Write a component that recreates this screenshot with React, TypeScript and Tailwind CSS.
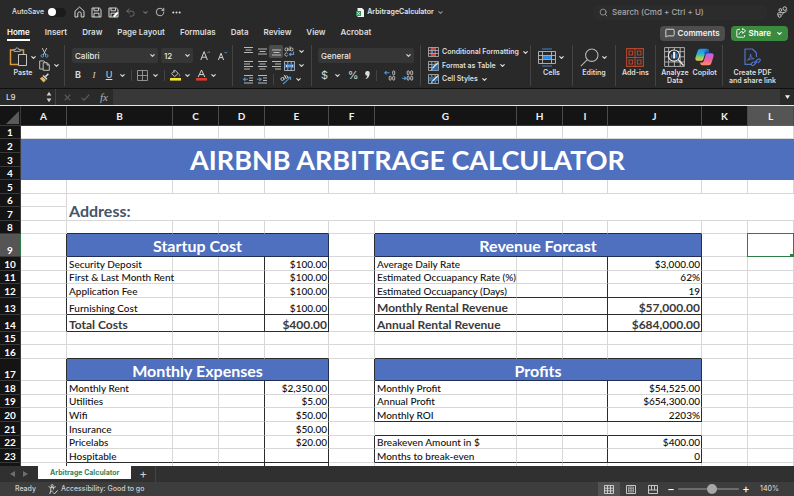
import { Fragment, useState, type ReactNode } from "react";
import { ChevronDown, MessageSquare, RotateCw, Search, Undo2 } from "lucide-react";
import clsx from "clsx";

const UI = "font-['Inter','Liberation_Sans',sans-serif]";
const SHEET = "font-['Lato','Liberation_Sans',sans-serif]";

const LIGHT_R = "border-r-[#d8d8d8]";
const DARK_R = "border-r-[#2b2b2b]";
const LIGHT_B = "border-b-[#d8d8d8]";
const DARK_B = "border-b-[#2b2b2b]";

type Box = {
  title?: string;
  label?: string;
  value?: string;
  bold?: boolean;
  line?: boolean;
  empty?: boolean;
};

type SheetRow = { n?: number; h: string; left?: Box; right?: Box };

const columns = [
  { name: "A", w: "w-[46px]" },
  { name: "B", w: "w-[106px]" },
  { name: "C", w: "w-[46px]" },
  { name: "D", w: "w-[46px]" },
  { name: "E", w: "w-[64px]" },
  { name: "F", w: "w-[46px]" },
  { name: "G", w: "w-[142px]" },
  { name: "H", w: "w-[46px]" },
  { name: "I", w: "w-[45px]" },
  { name: "J", w: "w-[94px]" },
  { name: "K", w: "w-[46px]" },
  { name: "L", w: "w-auto" },
];

const line: Box = { empty: true, line: true };

const rows: SheetRow[] = [
  { n: 8, h: "h-[13px]", left: line, right: line },
  { n: 9, h: "h-[23px]", left: { title: "Startup Cost" }, right: { title: "Revenue Forcast" } },
  { n: 10, h: "h-[14px]", left: { label: "Security Deposit", value: "$100.00" }, right: { label: "Average Daily Rate", value: "$3,000.00" } },
  { n: 11, h: "h-[13px]", left: { label: "First & Last Month Rent", value: "$100.00" }, right: { label: "Estimated Occuapancy Rate (%)", value: "62%" } },
  { n: 12, h: "h-[14px]", left: { label: "Application Fee", value: "$100.00" }, right: { label: "Estimated Occuapancy (Days)", value: "19", line: true } },
  { n: 13, h: "h-[17px]", left: { label: "Furnishing Cost", value: "$100.00", line: true }, right: { label: "Monthly Rental Revenue", value: "$57,000.00", bold: true, line: true } },
  { n: 14, h: "h-[17px]", left: { label: "Total Costs", value: "$400.00", bold: true, line: true }, right: { label: "Annual Rental Revenue", value: "$684,000.00", bold: true, line: true } },
  { n: 15, h: "h-[13px]" },
  { n: 16, h: "h-[14px]", left: line, right: line },
  { n: 17, h: "h-[22px]", left: { title: "Monthly Expenses" }, right: { title: "Profits" } },
  { n: 18, h: "h-[14px]", left: { label: "Monthly Rent", value: "$2,350.00" }, right: { label: "Monthly Profit", value: "$54,525.00" } },
  { n: 19, h: "h-[13px]", left: { label: "Utilities", value: "$5.00" }, right: { label: "Annual Profit", value: "$654,300.00" } },
  { n: 20, h: "h-[14px]", left: { label: "Wifi", value: "$50.00" }, right: { label: "Monthly ROI", value: "2203%", line: true } },
  { n: 21, h: "h-[14px]", left: { label: "Insurance", value: "$50.00" }, right: line },
  { n: 22, h: "h-[13px]", left: { label: "Pricelabs", value: "$20.00" }, right: { label: "Breakeven Amount in $", value: "$400.00" } },
  { n: 23, h: "h-[14px]", left: { label: "Hospitable", line: true }, right: { label: "Months to break-even", value: "0", line: true } },
  { h: "h-[14px]", left: { label: "" } },
];

function Chevron({ className }: { className?: string }) {
  return <ChevronDown size={7} strokeWidth={4} className={clsx("shrink-0", className)} />;
}

function IconButton({ label, className, children }: { label: string; className?: string; children: ReactNode }) {
  return (
    <button type="button" aria-label={label} className={clsx("flex shrink-0 items-center justify-center", className)}>
      {children}
    </button>
  );
}

function Divider({ className }: { className?: string }) {
  return <div className={clsx("w-px shrink-0 bg-[#444]", className)} />;
}

function HomeIcon() {
  return (
    <svg width="11" height="12" viewBox="0 0 11 12" fill="none" stroke="#d6d6d6">
      <path d="M1 5.2 5.5 1 10 5.2V11H7.2V7.6a1.7 1.7 0 0 0-3.4 0V11H1z" strokeLinejoin="round" />
    </svg>
  );
}

function SaveIcon({ pencil }: { pencil?: boolean }) {
  return (
    <svg width="11" height="11" viewBox="0 0 11 11" fill="none" stroke="#d6d6d6">
      <path d="M1 1h7.4L10 2.6V10H1z" strokeLinejoin="round" />
      <path d="M3 1v2.8h4.6V1M3 10V6.2h5V10" />
      {pencil && <path d="M5.6 9.8 9.8 5.4" stroke="#fff" strokeWidth="2" />}
    </svg>
  );
}

function PasteIcon() {
  return (
    <svg width="19" height="20" viewBox="0 0 19 20" fill="none">
      <path d="M9 17.5H1.5V3h13v4" stroke="#dd9a3c" strokeWidth="1.5" />
      <path d="M5 4.4V2.4h1.6a1.5 1.5 0 0 1 3 0h1.6v2z" fill="#292929" stroke="#bbb" strokeWidth=".9" />
      <path d="M9.5 7.5h8v11h-8z" fill="#292929" stroke="#c4c4c4" />
    </svg>
  );
}

function CutIcon() {
  return (
    <svg width="9" height="11" viewBox="0 0 9 11" fill="none">
      <path d="m2.2 1 3.6 7M6.8 1 3.2 8" stroke="#d0d0d0" strokeWidth=".9" />
      <circle cx="2.3" cy="8.9" r="1.3" stroke="#4f97d8" />
      <circle cx="6.7" cy="8.9" r="1.3" stroke="#4f97d8" />
    </svg>
  );
}

function CopyIcon() {
  return (
    <svg width="11" height="11" viewBox="0 0 11 11" fill="none" stroke="#cfcfcf" strokeWidth=".9">
      <path d="M4 9H.7V.9h4.1L6.3 2.4" />
      <path d="M4.2 2.7h4L10.3 5v5.3H4.2z" />
      <path d="M8 2.8V5h2.3" />
    </svg>
  );
}

function BrushIcon() {
  return (
    <svg width="11" height="10" viewBox="0 0 11 10" fill="none">
      <path d="m6.4 3.6 3-2.8" stroke="#d9d9d9" strokeWidth="1.5" />
      <path d="m4 2.6 4 3.6" stroke="#d9d9d9" strokeWidth="1.4" />
      <path d="M3.4 3.8 7 7 4.6 9.4.8 5.6z" fill="#e5b566" />
    </svg>
  );
}

function BordersIcon() {
  return (
    <svg width="11" height="11" viewBox="0 0 11 11" fill="none" stroke="#9c9c9c" strokeWidth=".9">
      <path d="M.5.5h10v10H.5z" />
      <path d="M5.5.5v10M.5 5.5h10" />
    </svg>
  );
}

function FillIcon() {
  return (
    <svg width="11" height="12" viewBox="0 0 11 12" fill="none">
      <path d="m5 1.2 3.2 3.2-3.6 3.3-3-3z" stroke="#d6d6d6" strokeWidth=".9" />
      <path d="M4 .8v3" stroke="#d6d6d6" strokeWidth=".8" />
      <path d="M8.4 4.4c1.4.6 1.3 2 .9 3" stroke="#4f97d8" />
      <path d="M0 9h11v2.6H0z" fill="#f7e733" />
    </svg>
  );
}

function FontColorIcon() {
  return (
    <svg width="11" height="12" viewBox="0 0 11 12" fill="none">
      <path d="m2.2 8 3.3-7 3.3 7M3.4 5.6h4.2" stroke="#d6d6d6" strokeWidth="1" />
      <path d="M0 9h11v2.6H0z" fill="#dc3a2c" />
    </svg>
  );
}

function FontSizeIcon({ large }: { large?: boolean }) {
  return (
    <svg width="11" height="11" viewBox="0 0 11 11" fill="none">
      <path d={large ? "M.8 10 4.1 1.6 7.4 10M2 7.2h4.2" : "M1.4 10 4 3.2 6.6 10M2.4 7.6h3.2"} stroke="#d2d2d2" strokeWidth="1" />
      <path d={large ? "m7.4 3 1.3-1.4L10 3" : "m7.4 1.8 1.3 1.4L10 1.8"} stroke="#4f97d8" strokeWidth=".9" />
    </svg>
  );
}

const alignPaths: Record<string, string> = {
  "Top align": "M1 1.5h9M2.5 4h6M1 6.5h9",
  "Middle align": "M1 3h9M2.5 5.5h6M1 8h9",
  "Bottom align": "M1 4h9M2.5 6.5h6M1 9h9",
  "Align left": "M1 1.5h9M1 4h6M1 6.5h9M1 9h6",
  Center: "M1 1.5h9M2.5 4h6M1 6.5h9M2.5 9h6",
  "Align right": "M1 1.5h9M4 4h6M1 6.5h9M4 9h6",
};

function AlignIcon({ name }: { name: string }) {
  return (
    <svg width="11" height="11" viewBox="0 0 11 11" fill="none" stroke="#c8c8c8" strokeWidth=".9">
      <path d={alignPaths[name]} />
    </svg>
  );
}

function IndentIcon({ flip }: { flip?: boolean }) {
  return (
    <svg width="11" height="11" viewBox="0 0 11 11" fill="none">
      <path d="M1 1.5h9M6 4h4M6 6.5h4M1 9h9" stroke="#c8c8c8" strokeWidth=".9" />
      <path d={flip ? "M0 5.3h4M2.4 3.6l1.8 1.7L2.4 7" : "M5 5.3H1M2.4 3.6.7 5.3 2.4 7"} stroke="#4f97d8" strokeWidth="1.1" />
    </svg>
  );
}

function WrapIcon() {
  return (
    <svg width="11" height="11" viewBox="0 0 11 11" fill="none" strokeWidth=".9">
      <g stroke="#c8c8c8">
        <circle cx="2.4" cy="3.4" r="1.5" />
        <path d="M4 1.8v3.3M6 .3V5" />
        <circle cx="7.6" cy="3.4" r="1.5" />
        <path d="M3.6 7.4a1.6 1.6 0 1 0 0 2.2" />
      </g>
      <path d="M9.5 5.6v2.8H5.6M7 7 5.4 8.4 7 9.9" stroke="#4f97d8" strokeWidth="1.1" />
    </svg>
  );
}

function MergeIcon() {
  return (
    <svg width="11" height="10" viewBox="0 0 11 10" fill="none">
      <path d="M.5.5h10v9H.5zM3.8.5v9M7.2.5v9" stroke="#b9cde0" strokeWidth=".8" />
      <path d="M.9 2.8h9.2v4.4H.9z" fill="#2a6cab" />
      <path d="M2 5h7M3.4 3.7 2 5l1.4 1.3M7.6 3.7 9 5 7.6 6.3" stroke="#e4eef8" strokeWidth=".8" />
    </svg>
  );
}

function OrientationIcon() {
  return (
    <svg width="12" height="11" viewBox="0 0 12 11" fill="none">
      <g stroke="#c8c8c8" strokeWidth=".9">
        <circle cx="2.4" cy="5" r="1.5" />
        <path d="m3 3.2 1.6 2.4M4 .8l2.2 3.6" />
        <circle cx="6.4" cy="3" r="1.3" />
      </g>
      <path d="m3 10 7.4-6.6M7.8 3.4h2.8V6" stroke="#4f97d8" strokeWidth="1.1" />
    </svg>
  );
}

function DecimalIcon({ more }: { more?: boolean }) {
  return (
    <svg width="12" height="11" viewBox="0 0 12 11" fill="none">
      <g stroke="#c8c8c8" strokeWidth=".9">
        <rect x="5.2" y="6.2" width="2" height="4" rx="1" />
        <rect x="8.7" y="6.2" width="2" height="4" rx="1" />
        {!more && <rect x="5.2" y=".8" width="2" height="4" rx="1" />}
        <rect x="8.7" y=".8" width="2" height="4" rx="1" />
      </g>
      <path
        d={more ? "M5.6 2.8H.8M2.5 1.2.8 2.8l1.7 1.6" : "M0 8.2h3.8M2.3 6.6 4 8.2 2.3 9.8"}
        stroke="#4f97d8"
        strokeWidth="1.1"
      />
    </svg>
  );
}

function TableStyleIcon({ kind }: { kind: "cond" | "table" | "cell" }) {
  return (
    <svg width="11" height="10" viewBox="0 0 11 10" fill="none">
      <path d="M.5.5h10v9H.5zM.5 3.5h10M.5 6.5h10M3.8.5v9M7.2.5v9" stroke="#b8b8b8" strokeWidth=".8" />
      {kind === "cond" && (
        <>
          <path d="M2.6 1h4v2h-4zM2.6 7h5.2v2H2.6z" fill="#e0443c" />
          <path d="M2.6 4h2.6v2H2.6z" fill="#3f86cc" />
        </>
      )}
      {kind === "table" && <path d="M4 3.6h6.2v5.6H4z" fill="#2a6cab" />}
      {kind === "cell" && <path d="M1 3h9v4H1z" fill="#2a6cab" />}
      {kind !== "cond" && (
        <>
          <path d="M4.6 7 10 1.6" stroke="#e8e8e8" strokeWidth="1.3" />
          <path d="M2.6 9.4c.3-1.6 1-2.4 2.4-2.2.4 1.4-.8 2.2-2.4 2.2z" fill="#7db7ea" />
        </>
      )}
    </svg>
  );
}

function CellsIcon() {
  return (
    <svg width="18" height="19" viewBox="0 0 18 19" fill="none">
      <path d="M4 1h10M4 18h10" stroke="#3f86cc" />
      <path d="M.5 3.5h17v12H.5zM.5 7.5h17M.5 11.5h17M4.5 3.5v12M13.5 3.5v12" stroke="#b8b8b8" strokeWidth=".9" />
      <path d="M5 8h8v3.2H5z" fill="#3288d8" />
    </svg>
  );
}

function EditingIcon() {
  return (
    <svg width="19" height="19" viewBox="0 0 19 19" fill="none" stroke="#b4b4b4" strokeWidth="1.1">
      <circle cx="11.8" cy="7.2" r="6.2" />
      <path d="M7.4 11.6.8 18.2" />
    </svg>
  );
}

function AddinsIcon() {
  return (
    <svg width="18" height="19" viewBox="0 0 18 19" fill="none" stroke="#b1472d" strokeWidth="1.1">
      <path d="M.6.6h16.8v17.8H.6zM9 .6v17.8M.6 9.5h16.8" />
      <path d="M3 3h3.6v4H3zM11.4 3H15v4h-3.6zM3 12h3.6v4H3zM11.4 12H15v4h-3.6z" />
    </svg>
  );
}

function AnalyzeIcon() {
  return (
    <svg width="21" height="20" viewBox="0 0 21 20" fill="none">
      <path d="M.6.6h19.8v18.8H.6zM.6 4.6h19.8M.6 9.8h19.8M.6 15h19.8M4.6.6v18.8M10.4.6v18.8M16.2.6v18.8" stroke="#b9b9b9" strokeWidth=".9" />
      <circle cx="10" cy="8.6" r="5.6" fill="#292929" stroke="#e6e6e6" strokeWidth="1.2" />
      <path d="m14.2 12.8 5.4 5.6" stroke="#e6e6e6" strokeWidth="1.5" />
      <path d="M6.8 7.4h1.8v3.8H6.8z" fill="#2d7fd0" />
      <path d="M9.1 4.8h2.2v6.8H9.1z" fill="#f2f2f2" />
      <path d="M11.8 6.4h1.8v4.8h-1.8z" fill="#2d7fd0" />
    </svg>
  );
}

function CopilotIcon() {
  return (
    <svg width="19" height="18" viewBox="0 0 19 18">
      <defs>
        <linearGradient id="cpA" x1="0" y1="0" x2="0" y2="1">
          <stop offset="0" stopColor="#1f8df0" />
          <stop offset=".45" stopColor="#2cb6c8" />
          <stop offset=".75" stopColor="#9bd05a" />
          <stop offset="1" stopColor="#f4c63a" />
        </linearGradient>
        <linearGradient id="cpB" x1="0" y1="0" x2="0" y2="1">
          <stop offset="0" stopColor="#a46bf5" />
          <stop offset=".5" stopColor="#ec5aa5" />
          <stop offset="1" stopColor="#ff8d5c" />
        </linearGradient>
      </defs>
      <path d="M5.6.8h6.2c1.4 0 1.8 1 2.2 2.6h-1.6c-1.2 0-1.8.6-2.2 1.8L8.4 11c-.4 1.2-1 1.8-2.2 1.8H2.4C.6 12.8 0 11.4.5 9.6L2.6 3C3.1 1.5 4 .8 5.6.8z" fill="url(#cpA)" />
      <path d="M13.4 17.2H7.2c-1.4 0-1.800-1-2.200-2.600h1.600c1.200 0 1.800-.6 2.200-1.800L10.600 7c.4-1.200 1-1.800 2.200-1.800h3.800c1.800 0 2.400 1.400 1.900 3.200L16.400 15c-.5 1.500-1.400 2.200-3 2.200z" fill="url(#cpB)" />
      <path d="M11.8.8c1.400 0 1.800 1 2.200 2.600l.5 1.800h-1.700c-1.200 0-1.800.6-2.200 1.800l-.5 1.400L9 4z" fill="#2458d8" opacity=".75" />
    </svg>
  );
}

function PdfIcon() {
  return (
    <svg width="17" height="19" viewBox="0 0 17 19" fill="none" stroke="#5272c8" strokeWidth="1.2">
      <path d="M7 16.4H1V1h7.5L12.4 5v4" strokeLinejoin="round" />
      <path d="M3.4 12.2c2-1.2 3.2-3.6 3.2-6.200 0 3 1.400 4.400 3.600 4.800-2.400-.2-4.800.2-6.800 1.400z" strokeWidth="1" />
      <path d="m10.200 14.800 3.800-3.600c1.600-1 3 .6 1.800 2l-1.600 1.600M13.400 13.600l-3.800 3.600c-1.600 1-3-.6-1.800-2l1.600-1.600" />
    </svg>
  );
}

function WorkbookIcon() {
  return (
    <svg width="8" height="9" viewBox="0 0 8 9">
      <path d="M1.5 0H6l2 2v7H1.5z" fill="#f3f3f3" />
      <path d="M0 3h5v5H0z" fill="#2f9455" />
      <path d="m1.3 4.2 2.4 2.6M3.7 4.2 1.3 6.8" stroke="#fff" strokeWidth=".8" />
    </svg>
  );
}

function PresenceIcon() {
  return (
    <svg width="12" height="12" viewBox="0 0 12 12" fill="none" stroke="#d2d2d2" strokeWidth=".9">
      <circle cx="8.8" cy="2.6" r="1.8" />
      <circle cx="4.4" cy="4" r="1.4" />
      <path d="M2 9.4c-1.2-1.600 0-2.800 1.400-2.800h3.200c2 0 3.600-.6 4.400-2.200M5.400 9.400l2-2.400" />
      <circle cx="3.6" cy="9.8" r="1.5" />
    </svg>
  );
}

function ShareIcon() {
  return (
    <svg width="10" height="10" viewBox="0 0 10 10" fill="none" stroke="#fff" strokeWidth=".9">
      <path d="M4 1.4H1.8a1 1 0 0 0-1 1v5.800a1 1 0 0 0 1 1h5.800a1 1 0 0 0 1-1V7" />
      <path d="M3 6.6c.4-2.200 1.600-3 3.600-3V5.400l3-2.600-3-2.400v1.600" strokeLinejoin="round" />
    </svg>
  );
}

function AccessibilityIcon() {
  return (
    <svg width="10" height="11" viewBox="0 0 10 11" fill="none" stroke="#d4d4d4" strokeWidth="1">
      <circle cx="4.2" cy="1.7" r="1.1" />
      <path d="M.6 2.6c2 1.4 5.2 1.4 7.2 0M2.8 4v2.4L1.8 10M5.6 4v1.4M4.2 6.6 3.8 8" />
      <path d="m5 8.4 1.5 1.5L9.6 6.4" />
    </svg>
  );
}

function ViewIcon({ kind }: { kind: string }) {
  return (
    <svg width="10" height="9" viewBox="0 0 10 9" fill="none" stroke="#d6d6d6" strokeWidth=".9">
      <path d="M.5.5h9v8h-9z" />
      {kind === "Normal" && <path d="M.5 3.2h9M.5 5.8h9M3.5.5v8M6.5.5v8" />}
      {kind === "Page Layout" && <path d="M2.5 2h5v5h-5zM2.5 3.7h5M2.5 5.3h5M5 2v5" stroke="#a4a4a4" />}
      {kind === "Page Break" && <path d="M3.5.5V5H.5M6.5.5V5h-3M6.5 5h3" />}
    </svg>
  );
}

function TitleBar() {
  return (
    <div className="flex h-6 shrink-0 items-center pl-3 pr-[6px]">
      <div className="flex flex-1 items-center gap-[6px]">
        <label className="flex items-center gap-1 text-[7px] font-medium text-[#e0e0e0]">
          AutoSave
          <input type="checkbox" className="peer sr-only" />
          <span className="flex h-[9px] w-[18px] items-center rounded-full bg-[#1b1b1b] peer-checked:justify-end">
            <span className="h-2 w-2 rounded-full bg-white" />
          </span>
        </label>
        <IconButton label="Home screen" className="ml-[2px] w-[11px]"><HomeIcon /></IconButton>
        <IconButton label="Save" className="w-[11px]"><SaveIcon /></IconButton>
        <IconButton label="Save as" className="w-[11px]"><SaveIcon pencil /></IconButton>
        <IconButton label="Undo" className="w-[11px] text-[#707070]"><Undo2 size={11} /></IconButton>
        <IconButton label="Undo history" className="w-[6px] text-[#707070]"><Chevron /></IconButton>
        <IconButton label="Repeat" className="w-[11px] text-[#d6d6d6]"><RotateCw size={10} /></IconButton>
        <IconButton label="More" className="w-[11px]">
          <svg width="9" height="3" viewBox="0 0 9 3" fill="#dedede">
            <circle cx="1.3" cy="1.5" r="1" />
            <circle cx="4.5" cy="1.5" r="1" />
            <circle cx="7.7" cy="1.5" r="1" />
          </svg>
        </IconButton>
      </div>
      <button type="button" className="flex items-center gap-[3px] text-[7px] font-semibold text-[#e4e4e4]">
        <WorkbookIcon />
        ArbitrageCalculator
        <Chevron className="text-[#8a8a8a]" />
      </button>
      <div className="flex flex-1 items-center justify-end gap-[9px]">
        <label className="flex h-[15px] w-[174px] items-center gap-1 rounded bg-[#2c2c2c] px-[6px] text-[#a8a8a8]">
          <Search size={9} />
          <input
            type="search"
            aria-label="Search"
            placeholder="Search (Cmd + Ctrl + U)"
            className="min-w-0 flex-1 bg-transparent text-[8px] font-medium outline-none placeholder:text-[#a8a8a8]"
          />
        </label>
        <IconButton label="Presence"><PresenceIcon /></IconButton>
      </div>
    </div>
  );
}

const tabs = ["Home", "Insert", "Draw", "Page Layout", "Formulas", "Data", "Review", "View", "Acrobat"];

function RibbonTabs() {
  const [active, setActive] = useState("Home");
  return (
    <div className="flex h-[18px] shrink-0 items-center justify-between pl-[7px] pr-[6px]">
      <nav className="flex gap-[15px] text-[8px] font-semibold text-[#dcdcdc]">
        {tabs.map((tab) => (
          <button
            key={tab}
            type="button"
            onClick={() => setActive(tab)}
            className={clsx("border-b-2 leading-[14px]", tab === active ? "border-white text-white" : "border-transparent")}
          >
            {tab}
          </button>
        ))}
      </nav>
      <div className="flex gap-[6px] text-[8px] font-semibold text-[#f0f0f0]">
        <button type="button" className="flex h-[15px] items-center gap-[3px] rounded bg-[#4d4d4d] px-[5px]">
          <MessageSquare size={10} />
          Comments
        </button>
        <button type="button" className="flex h-[15px] items-center gap-[3px] rounded bg-[#3a8a3f] px-[5px] text-white">
          <ShareIcon />
          Share
          <Chevron className="ml-[2px]" />
        </button>
      </div>
    </div>
  );
}

function RibbonSelect({ label, value, className }: { label: string; value: string; className: string }) {
  return (
    <div className={clsx("relative", className)}>
      <select aria-label={label} className="block h-[15px] w-full appearance-none rounded-xs bg-[#363636] px-[3px] text-[8px] font-medium text-[#e8e8e8]">
        <option>{value}</option>
      </select>
      <Chevron className="pointer-events-none absolute right-[2px] top-1 text-[#d8d8d8]" />
    </div>
  );
}

function BigButton({ label, icon, menu }: { label: string; icon: ReactNode; menu?: boolean }) {
  return (
    <button type="button" className="flex flex-col items-center gap-[2px] whitespace-pre text-center text-[7px] font-semibold leading-[8px] text-[#dedede]">
      <span className="flex h-5 items-center gap-[2px]">
        {icon}
        {menu && <Chevron />}
      </span>
      {label}
    </button>
  );
}

function Ribbon() {
  return (
    <div className="flex h-[47px] shrink-0 border-b border-[#111] pb-[2px] pt-[3px] text-[#d8d8d8]">
      <div className="flex w-16 shrink-0 items-start gap-[2px] pl-[9px] pt-[2px]">
        <BigButton label="Paste" icon={<PasteIcon />} menu />
        <div className="flex flex-col items-start gap-[2px]">
          <IconButton label="Cut" className="w-[11px]"><CutIcon /></IconButton>
          <IconButton label="Copy" className="gap-[3px]"><CopyIcon /><Chevron /></IconButton>
          <IconButton label="Format painter"><BrushIcon /></IconButton>
        </div>
      </div>
      <Divider />
      <div className="flex w-[167px] shrink-0 flex-col justify-between pb-1 pl-[7px] pt-[3px]">
        <div className="flex items-center gap-[3px]">
          <RibbonSelect label="Font" value="Calibri" className="w-[86px]" />
          <RibbonSelect label="Font size" value="12" className="w-[32px]" />
          <IconButton label="Increase font size" className="ml-1"><FontSizeIcon large /></IconButton>
          <IconButton label="Decrease font size" className="ml-[3px]"><FontSizeIcon /></IconButton>
        </div>
        <div className="flex items-center gap-[5px] text-[9px] leading-[14px]">
          <IconButton label="Bold" className="w-3 font-bold">B</IconButton>
          <IconButton label="Italic" className="w-[10px] font-['Liberation_Serif',serif] italic">I</IconButton>
          <IconButton label="Underline" className="w-[10px] underline">U</IconButton>
          <Chevron />
          <Divider className="h-[11px]" />
          <IconButton label="Borders" className="gap-1"><BordersIcon /><Chevron /></IconButton>
          <Divider className="h-[11px]" />
          <IconButton label="Fill color" className="gap-[3px]"><FillIcon /><Chevron /></IconButton>
          <IconButton label="Font color" className="gap-[3px]"><FontColorIcon /><Chevron /></IconButton>
        </div>
      </div>
      <Divider />
      <div className="grid w-[78px] shrink-0 grid-cols-[14px_14px_14px_22px] content-between justify-center pl-[2px]">
        {["Top align", "Middle align", "Bottom align"].map((name) => (
          <IconButton key={name} label={name} className={clsx("h-[13px]", name === "Bottom align" && "rounded-xs bg-[#4c4c4c]")}>
            <AlignIcon name={name} />
          </IconButton>
        ))}
        <IconButton label="Wrap text" className="gap-[3px]"><WrapIcon /><Chevron /></IconButton>
        {["Align left", "Center", "Align right"].map((name) => (
          <IconButton key={name} label={name} className="h-[13px]"><AlignIcon name={name} /></IconButton>
        ))}
        <IconButton label="Merge" className="gap-[3px]"><MergeIcon /><Chevron /></IconButton>
        <IconButton label="Decrease indent" className="h-[13px]"><IndentIcon /></IconButton>
        <IconButton label="Increase indent" className="h-[13px]"><IndentIcon flip /></IconButton>
        <div className="col-span-2 flex items-center justify-center gap-[6px]">
          <Divider className="h-[11px]" />
          <IconButton label="Orientation" className="gap-[3px]"><OrientationIcon /><Chevron /></IconButton>
        </div>
      </div>
      <Divider />
      <div className="flex w-[108px] shrink-0 flex-col justify-between pb-1 pl-[6px] pr-[6px] pt-[3px]">
        <RibbonSelect label="Number format" value="General" className="w-full" />
        <div className="flex items-center justify-between pl-[3px] text-[11px] leading-[14px]">
          <IconButton label="Currency">$</IconButton>
          <Chevron />
          <IconButton label="Percent">%</IconButton>
          <IconButton label="Comma style">
            <svg width="5" height="8" viewBox="0 0 5 8" fill="#dedede">
              <path d="M2.4 0a2.2 2.2 0 0 1 2.3 2.400C4.700 5 3.200 7 .9 8l-.3-.6c1-.7 1.600-1.600 1.700-2.700A2.200 2.200 0 0 1 .2 2.300 2.200 2.200 0 0 1 2.400 0z" />
            </svg>
          </IconButton>
          <Divider className="h-[11px]" />
          <IconButton label="Increase decimal"><DecimalIcon more /></IconButton>
          <IconButton label="Decrease decimal"><DecimalIcon /></IconButton>
        </div>
      </div>
      <Divider />
      <div className="flex w-[109px] shrink-0 flex-col justify-between py-[1px] pl-[7px] text-[7px] font-semibold leading-[12px] text-[#dedede]">
        <button type="button" className="flex items-center gap-[3px] whitespace-nowrap">
          <TableStyleIcon kind="cond" />Conditional Formatting<Chevron />
        </button>
        <button type="button" className="flex items-center gap-[3px] whitespace-nowrap">
          <TableStyleIcon kind="table" />Format as Table<Chevron />
        </button>
        <button type="button" className="flex items-center gap-[3px] whitespace-nowrap">
          <TableStyleIcon kind="cell" />Cell Styles<Chevron />
        </button>
      </div>
      <Divider />
      <div className="flex w-[41px] shrink-0 items-start justify-center pt-[2px]">
        <BigButton label="Cells" icon={<CellsIcon />} menu />
      </div>
      <Divider />
      <div className="flex w-[42px] shrink-0 items-start justify-center pt-[2px]">
        <BigButton label="Editing" icon={<EditingIcon />} menu />
      </div>
      <Divider />
      <div className="flex w-[39px] shrink-0 items-start justify-center pt-[2px]">
        <BigButton label="Add-ins" icon={<AddinsIcon />} />
      </div>
      <Divider />
      <div className="flex w-[66px] shrink-0 items-start justify-center gap-1 pt-[2px]">
        <BigButton label={"Analyze\nData"} icon={<AnalyzeIcon />} />
        <BigButton label="Copilot" icon={<CopilotIcon />} />
      </div>
      <Divider />
      <div className="flex shrink-0 items-start pl-[6px] pt-[2px]">
        <BigButton label={"Create PDF\nand share link"} icon={<PdfIcon />} />
      </div>
    </div>
  );
}

function FormulaBar() {
  return (
    <div className="flex h-[17px] shrink-0 items-center border-b border-[#e6e6e6] bg-[#2a2a2a] text-[8px]">
      <input aria-label="Name box" defaultValue="L9" className="w-[46px] bg-transparent pl-[6px] font-medium text-[#dedede] outline-none" />
      <svg width="6" height="12" viewBox="0 0 6 12" fill="#d0d0d0">
        <path d="M3 .8 5.4 4.6H.6zM3 11.2.6 7.4h4.8z" />
      </svg>
      <Divider className="ml-[3px] h-4" />
      <IconButton label="Cancel" className="ml-[6px] w-[10px]">
        <svg width="7" height="7" viewBox="0 0 7 7" stroke="#5c5c5c" strokeWidth="1.2"><path d="m.7.7 5.6 5.6M6.3.7.7 6.3" /></svg>
      </IconButton>
      <IconButton label="Enter" className="ml-2 w-[10px]">
        <svg width="9" height="7" viewBox="0 0 9 7" fill="none" stroke="#5c5c5c" strokeWidth="1.2"><path d="m.7 3.8 2.3 2.4L8.3.7" /></svg>
      </IconButton>
      <IconButton label="Insert function" className="ml-2 w-3 font-['Liberation_Serif',serif] text-[11px] italic text-[#b4b4b4]">fx</IconButton>
      <input aria-label="Formula" className="ml-[3px] h-4 min-w-0 flex-1 bg-[#383838] px-1 text-white outline-none" />
      <IconButton label="Expand formula bar" className="h-4 w-[14px]">
        <svg width="5" height="4" viewBox="0 0 5 4" fill="#f0f0f0"><path d="M0 .3h5L2.5 4z" /></svg>
      </IconButton>
    </div>
  );
}

function RowHead({ n }: { n?: number }) {
  const on = n === 9;
  return (
    <th
      scope="row"
      className={clsx(
        "border-b border-b-[#3a3a3a] border-r p-0 align-bottom text-[10px] font-bold leading-[12px] text-white",
        on ? "border-r-[#2f7d46] bg-[#555]" : "border-r-[#3a3a3a] bg-[#141414]"
      )}
    >
      {n}
    </th>
  );
}

function Cell({ darkR, darkB, className, children }: { darkR?: boolean; darkB?: boolean; className?: string; children?: ReactNode }) {
  return (
    <td
      className={clsx(
        "whitespace-nowrap border-b border-r p-0 align-bottom leading-[12px]",
        darkR ? DARK_R : LIGHT_R,
        darkB ? DARK_B : LIGHT_B,
        className
      )}
    >
      {children}
    </td>
  );
}

function BoxCells({ box }: { box?: Box }) {
  if (box?.title) {
    return (
      <td
        colSpan={4}
        className="border-b border-r border-b-[#1f2f55] border-r-[#1f2f55] bg-[#4f70be] p-0 pt-[2px] text-center text-[16px] font-bold leading-[18px] text-white"
      >
        {box.title}
      </td>
    );
  }
  const framed = !!box && !box.empty;
  const text = box?.bold ? "text-[12px] font-bold text-[#3a3a3a]" : "text-[10px] font-medium text-[#111]";
  return (
    <>
      <Cell darkB={box?.line} className={clsx("pl-[2px]", text)}>{box?.label}</Cell>
      <Cell darkB={box?.line} />
      <Cell darkB={box?.line} darkR={framed} />
      <Cell darkB={box?.line} darkR={framed} className={clsx("pr-px text-right", text)}>{box?.value}</Cell>
    </>
  );
}

function Blanks({ count }: { count: number }) {
  return (
    <>
      {Array.from({ length: count }, (_, i) => (
        <Fragment key={i}><Cell /></Fragment>
      ))}
    </>
  );
}

function Sheet() {
  const framed = (box?: Box) => !!box && !box.empty;
  return (
    <main className={clsx("min-h-0 flex-1 overflow-hidden bg-white", SHEET)}>
      <table className="w-full table-fixed border-separate border-spacing-0">
        <colgroup>
          <col className="w-[21px]" />
          {columns.map((c) => <col key={c.name} className={c.w} />)}
        </colgroup>
        <thead>
          <tr className="h-5">
            <th className="border-b border-r border-[#3a3a3a] bg-[#141414] p-0 align-bottom">
              <svg width="14" height="14" viewBox="0 0 14 14" className="ml-auto" fill="#5a5a5a"><path d="M13 0v13H0z" /></svg>
            </th>
            {columns.map((c) => (
              <th
                key={c.name}
                scope="col"
                className={clsx(
                  "border-b border-r border-r-[#4a4a4a] p-0 text-[10px] font-bold leading-[12px] text-[#f0f0f0]",
                  c.name === "L" ? "border-b-[#2f7d46] bg-[#555]" : "border-b-[#3a3a3a] bg-[#141414]"
                )}
              >
                {c.name}
              </th>
            ))}
          </tr>
        </thead>
        <tbody>
          <tr className="h-[13px]">
            <RowHead n={1} />
            <Blanks count={12} />
          </tr>
          <tr className="h-[14px]">
            <RowHead n={2} />
            <td colSpan={12} rowSpan={3} className="bg-[#4f70be] p-0 text-center text-[27px] font-bold leading-[36px] text-white">
              AIRBNB ARBITRAGE CALCULATOR
            </td>
          </tr>
          <tr className="h-[14px]"><RowHead n={3} /></tr>
          <tr className="h-[13px]"><RowHead n={4} /></tr>
          <tr className="h-[14px]">
            <RowHead n={5} />
            <Blanks count={12} />
          </tr>
          <tr className="h-[13px]">
            <RowHead n={6} />
            <Cell />
            <td colSpan={11} rowSpan={2} className="border-b border-[#d8d8d8] p-0 pl-[2px] align-bottom text-[16px] font-bold leading-[18px] text-[#44546a]">
              Address:
            </td>
          </tr>
          <tr className="h-[14px]">
            <RowHead n={7} />
            <Cell />
          </tr>
          {rows.map((row, i) => (
            <tr key={i} className={row.h}>
              <RowHead n={row.n} />
              <Cell darkR={framed(row.left)} />
              <BoxCells box={row.left} />
              <Cell darkR={framed(row.right)} />
              <BoxCells box={row.right} />
              <Cell />
              <Cell className={row.n === 9 ? "relative" : undefined}>
                {row.n === 9 && (
                  <span className="absolute -inset-px border border-[#2f7d46]">
                    <span className="absolute -bottom-px right-0 h-[3px] w-[3px] bg-[#2f7d46]" />
                  </span>
                )}
              </Cell>
            </tr>
          ))}
        </tbody>
      </table>
    </main>
  );
}

function SheetTabs() {
  return (
    <div className="flex h-4 shrink-0 items-start bg-[#303030] text-[#6e6e6e]">
      <div className="flex h-4 w-[38px] items-center justify-center gap-2">
        <IconButton label="Previous sheet"><svg width="5" height="6" viewBox="0 0 5 6" fill="currentColor"><path d="M5 0v6L0 3z" /></svg></IconButton>
        <IconButton label="Next sheet"><svg width="5" height="6" viewBox="0 0 5 6" fill="currentColor"><path d="M0 0v6l5-3z" /></svg></IconButton>
      </div>
      <button type="button" className="h-[13px] bg-white px-3 text-[7px] font-bold leading-[13px] text-[#3a8457]">Arbitrage Calculator</button>
      <button type="button" aria-label="Add sheet" className="h-4 w-6 text-[12px] leading-[14px] text-[#d0d0d0]">+</button>
      <Divider className="h-4" />
    </div>
  );
}

function StatusBar() {
  const [zoom, setZoom] = useState(140);
  return (
    <footer className="flex h-[14px] shrink-0 items-center justify-between bg-[#3d3d3d] pl-[15px] pr-[15px] text-[7px] font-medium text-[#d0d0d0]">
      <div className="flex items-center gap-3">
        <span>Ready</span>
        <button type="button" className="flex items-center gap-[3px]">
          <AccessibilityIcon />
          Accessibility: Good to go
        </button>
      </div>
      <div className="flex items-center">
        {["Normal", "Page Layout", "Page Break"].map((kind) => (
          <IconButton key={kind} label={kind} className={clsx("h-[14px] w-[22px]", kind === "Normal" && "bg-[#525252]")}>
            <ViewIcon kind={kind} />
          </IconButton>
        ))}
        <IconButton label="Zoom out" className="w-[14px] text-[11px] leading-[12px] text-white">−</IconButton>
        <input
          type="range"
          aria-label="Zoom"
          min={10}
          max={240}
          value={zoom}
          onChange={(e) => setZoom(Number(e.currentTarget.value))}
          className="h-[2px] w-[61px] appearance-none rounded-full bg-[#6c6c6c] [&::-webkit-slider-thumb]:h-[10px] [&::-webkit-slider-thumb]:w-[10px] [&::-webkit-slider-thumb]:appearance-none [&::-webkit-slider-thumb]:rounded-full [&::-webkit-slider-thumb]:bg-[#a8a8a8]"
        />
        <IconButton label="Zoom in" className="w-[14px] text-[11px] leading-[12px] text-white">+</IconButton>
        <span className="w-[26px] text-right">{zoom}%</span>
      </div>
    </footer>
  );
}

export default function App() {
  return (
    <div className={clsx("flex h-screen flex-col overflow-hidden bg-[#292929]", UI)}>
      <TitleBar />
      <RibbonTabs />
      <Ribbon />
      <FormulaBar />
      <Sheet />
      <SheetTabs />
      <StatusBar />
    </div>
  );
}
